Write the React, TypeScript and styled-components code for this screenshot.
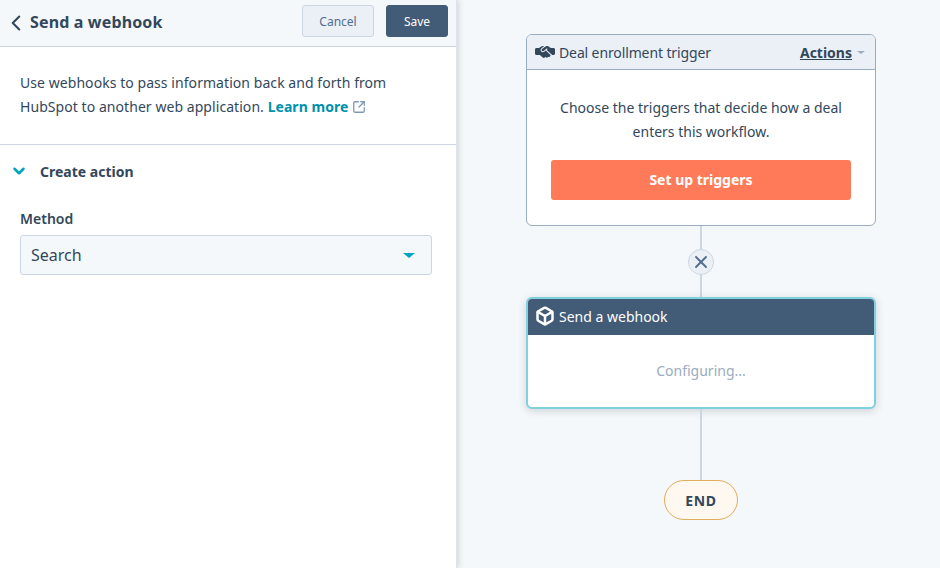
import { createGlobalStyle, styled } from "styled-components";
import { FaHandshakeSimple } from "react-icons/fa6";
import { Box, ChevronLeft, ChevronDown, SquareArrowOutUpRight, X } from "lucide-react";

const GlobalStyle = createGlobalStyle`
  html, body { margin: 0; padding: 0; height: 100%; }
  body { font-family: "Noto Sans", "Open Sans", sans-serif; color: #33475b; overflow: hidden; }
`;

const Page = styled.div`
  display: flex;
  width: 940px;
  height: 568px;
  background: #f5f8fa;
  overflow: hidden;
`;

const SidePanel = styled.aside`
  width: 457px;
  flex: none;
  background: #fff;
  box-shadow: 1px 0 6px rgba(45, 62, 80, 0.22);
  border-right: 1px solid #dfe3eb;
  box-sizing: border-box;
`;

const PanelHeader = styled.header`
  height: 47px;
  box-sizing: border-box;
  display: flex;
  align-items: center;
  padding: 0 8px 4px 3px;
  background: #f5f8fa;
  border-bottom: 1px solid #cbd6e2;
`;

const BackIcon = styled(ChevronLeft)`
  width: 26px;
  height: 26px;
  color: #33475b;
  flex: none;
  margin-top: 3px;
`;

const PanelTitle = styled.h1`
  margin: 2px 0 0 1px;
  flex: 1;
  font-size: 16px;
  font-weight: 700;
  letter-spacing: 0.15px;
  color: #33475b;
`;

const Button = styled.button<{ $primary?: boolean }>`
  height: 32px;
  box-sizing: border-box;
  border-radius: 3px;
  font: inherit;
  font-size: 12px;
  padding: 0;
  width: ${(p) => (p.$primary ? "62px" : "72px")};
  margin-left: ${(p) => (p.$primary ? "12px" : "0")};
  color: ${(p) => (p.$primary ? "#fff" : "#506e91")};
  background: ${(p) => (p.$primary ? "#425b76" : "#eaf0f6")};
  border: 1px solid ${(p) => (p.$primary ? "#425b76" : "#cbd6e2")};
`;

const Intro = styled.p`
  margin: 0;
  padding: 24px 20px 25px;
  font-size: 14px;
  line-height: 24px;
  letter-spacing: 0.06px;
  border-bottom: 1px solid #cbd6e2;
`;

const LearnMore = styled.a`
  color: #0091ae;
  font-weight: 700;
`;

const ExternalIcon = styled(SquareArrowOutUpRight)`
  width: 14px;
  height: 14px;
  color: #7c98b6;
  margin-left: 3px;
  vertical-align: -2px;
`;

const SectionToggle = styled.div`
  display: flex;
  align-items: center;
  height: 53px;
  padding-left: 10px;
  font-size: 14px;
  font-weight: 700;
`;

const ToggleIcon = styled(ChevronDown)`
  width: 18px;
  height: 18px;
  color: #00a4bd;
  margin-right: 12px;
  margin-top: -2px;
`;

const Field = styled.div`
  padding: 11px 24px 0 20px;
`;

const FieldLabel = styled.label`
  display: block;
  font-size: 14px;
  font-weight: 600;
  line-height: 20px;
  margin-bottom: 6px;
`;

const Select = styled.div`
  height: 40px;
  box-sizing: border-box;
  display: flex;
  align-items: center;
  justify-content: space-between;
  padding: 0 16px 0 10px;
  font-size: 16px;
  background: #f5f8fa;
  border: 1px solid #cbd6e2;
  border-radius: 3px;
`;

const Caret = styled.span<{ $size: number; $color: string }>`
  display: inline-block;
  width: 0;
  height: 0;
  border-left: ${(p) => p.$size}px solid transparent;
  border-right: ${(p) => p.$size}px solid transparent;
  border-top: ${(p) => p.$size - 1}px solid ${(p) => p.$color};
`;

const Canvas = styled.main`
  flex: 1;
  display: flex;
  flex-direction: column;
  align-items: center;
  padding: 34px 0 0 5px;
`;

const Card = styled.section<{ $active?: boolean }>`
  width: 350px;
  box-sizing: border-box;
  background: #fff;
  border-radius: 6px;
  overflow: hidden;
  border: ${(p) => (p.$active ? "2px solid #7fd1de" : "1px solid #99acc2")};
  box-shadow: ${(p) => (p.$active ? "0 2px 8px rgba(45, 62, 80, 0.2)" : "none")};
`;

const TriggerHeader = styled.div`
  height: 34px;
  display: flex;
  align-items: center;
  padding: 0 10px 0 8px;
  background: #eaf0f6;
  border-bottom: 1px solid #99acc2;
  font-size: 14px;
`;

const HeaderLabel = styled.span`
  margin-left: 4px;
  flex: 1;
`;

const TriggerLabel = styled(HeaderLabel)`
  letter-spacing: -0.12px;
`;

const ActionsLink = styled.span`
  font-weight: 700;
  text-decoration: underline;
  margin-right: 5px;
`;

const TriggerBody = styled.div`
  padding: 26px 24px 25px;
  text-align: center;
  font-size: 14px;
  line-height: 24px;
`;

const CtaButton = styled.div`
  height: 40px;
  margin-top: 16px;
  display: flex;
  align-items: center;
  justify-content: center;
  background: #ff7a59;
  color: #fff;
  font-size: 14px;
  font-weight: 700;
  border-radius: 3px;
`;

const Connector = styled.div<{ $height: number }>`
  width: 2px;
  height: ${(p) => p.$height}px;
  background: #cbd6e2;
`;

const RemoveButton = styled.div`
  width: 26px;
  height: 26px;
  box-sizing: border-box;
  display: flex;
  align-items: center;
  justify-content: center;
  border-radius: 50%;
  background: #eaf0f6;
  border: 1px solid #cbd6e2;
  color: #516f90;
`;

const WebhookHeader = styled.div`
  height: 36px;
  box-sizing: border-box;
  display: flex;
  align-items: center;
  padding: 0 7px 2px;
  background: #425b76;
  color: #fff;
  font-size: 14px;
`;

const WebhookBody = styled.div`
  height: 72px;
  box-sizing: border-box;
  padding-bottom: 2px;
  display: flex;
  align-items: center;
  justify-content: center;
  color: #99acc2;
  font-size: 14px;
`;

const EndPill = styled.div`
  width: 74px;
  height: 40px;
  box-sizing: border-box;
  display: flex;
  align-items: center;
  justify-content: center;
  border-radius: 20px;
  background: #fef8f0;
  border: 1px solid #e0ad5c;
  font-size: 14px;
  font-weight: 700;
  letter-spacing: 0.6px;
`;

export default function App() {
  return (
    <Page>
      <GlobalStyle />
      <SidePanel>
        <PanelHeader>
          <BackIcon strokeWidth={1.9} />
          <PanelTitle>Send a webhook</PanelTitle>
          <Button>Cancel</Button>
          <Button $primary>Save</Button>
        </PanelHeader>
        <Intro>
          Use webhooks to pass information back and forth from HubSpot to another web application.{" "}
          <LearnMore>
            Learn more
            <ExternalIcon strokeWidth={2.2} />
          </LearnMore>
        </Intro>
        <SectionToggle>
          <ToggleIcon strokeWidth={3.4} />
          Create action
        </SectionToggle>
        <Field>
          <FieldLabel>Method</FieldLabel>
          <Select>
            Search
            <Caret $size={6} $color="#00a4bd" />
          </Select>
        </Field>
      </SidePanel>
      <Canvas>
        <Card>
          <TriggerHeader>
            <FaHandshakeSimple size={20} color="#33475b" />
            <TriggerLabel>Deal enrollment trigger</TriggerLabel>
            <ActionsLink>Actions</ActionsLink>
            <Caret $size={4} $color="#99acc2" />
          </TriggerHeader>
          <TriggerBody>
            Choose the triggers that decide how a deal enters this workflow.
            <CtaButton>Set up triggers</CtaButton>
          </TriggerBody>
        </Card>
        <Connector $height={23} />
        <RemoveButton>
          <X size={20} strokeWidth={2.3} />
        </RemoveButton>
        <Connector $height={22} />
        <Card $active>
          <WebhookHeader>
            <Box size={20} strokeWidth={3} />
            <HeaderLabel>Send a webhook</HeaderLabel>
          </WebhookHeader>
          <WebhookBody>Configuring...</WebhookBody>
        </Card>
        <Connector $height={71} />
        <EndPill>END</EndPill>
      </Canvas>
    </Page>
  );
}
